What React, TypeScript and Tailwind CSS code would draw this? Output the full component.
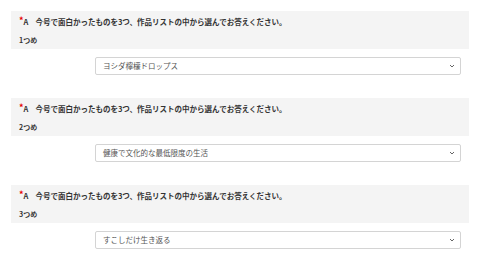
import React from "react";

const items = ["ヨシダ檸檬ドロップス", "健康で文化的な最低限度の生活", "すこしだけ生き返る"];
const labels = ["1つめ", "2つめ", "3つめ"];

function Chevron() {
  return (
    <svg width="6" height="4" viewBox="0 0 6 4" className="shrink-0">
      <path d="M1 1 L3 3 L5 1" fill="none" stroke="#666" strokeWidth="1" />
    </svg>
  );
}

function Block({ idx }: { idx: number }) {
  return (
    <div className="flex flex-col">
      <div className="h-[38px] bg-[#f4f4f4] pl-[8px] pt-[5px] flex flex-col">
        <div className="flex items-start h-[11px] leading-[11px] text-[7.5px] font-bold text-[#333]">
          <span className="text-[#e60000] text-[9px] leading-[9px] mt-[0px]">*</span>
          <span className="mr-[7px]">A</span>
          <span>今号で面白かったものを3つ、作品リストの中から選んでお答えください。</span>
        </div>
        <div className="mt-[8px] h-[11px] leading-[11px] text-[7px] font-bold text-[#333]">{labels[idx]}</div>
      </div>
      <div className="mt-[8px] ml-[84px] mr-[8px] h-[18px] border border-[#d4d4d4] rounded-[2px] bg-white flex items-center justify-between pl-[7px] pr-[5px]">
        <span className="text-[7.5px] text-[#555]">{items[idx]}</span>
        <Chevron />
      </div>
    </div>
  );
}

export default function App() {
  return (
    <div
      className="w-[480px] h-[265px] bg-white pt-[11px] pl-[11px] pr-[11px] flex flex-col gap-[23px] overflow-hidden"
      style={{ fontFamily: '"Noto Sans CJK JP", "Noto Sans", sans-serif' }}
    >
      <Block idx={0} />
      <Block idx={1} />
      <Block idx={2} />
    </div>
  );
}
